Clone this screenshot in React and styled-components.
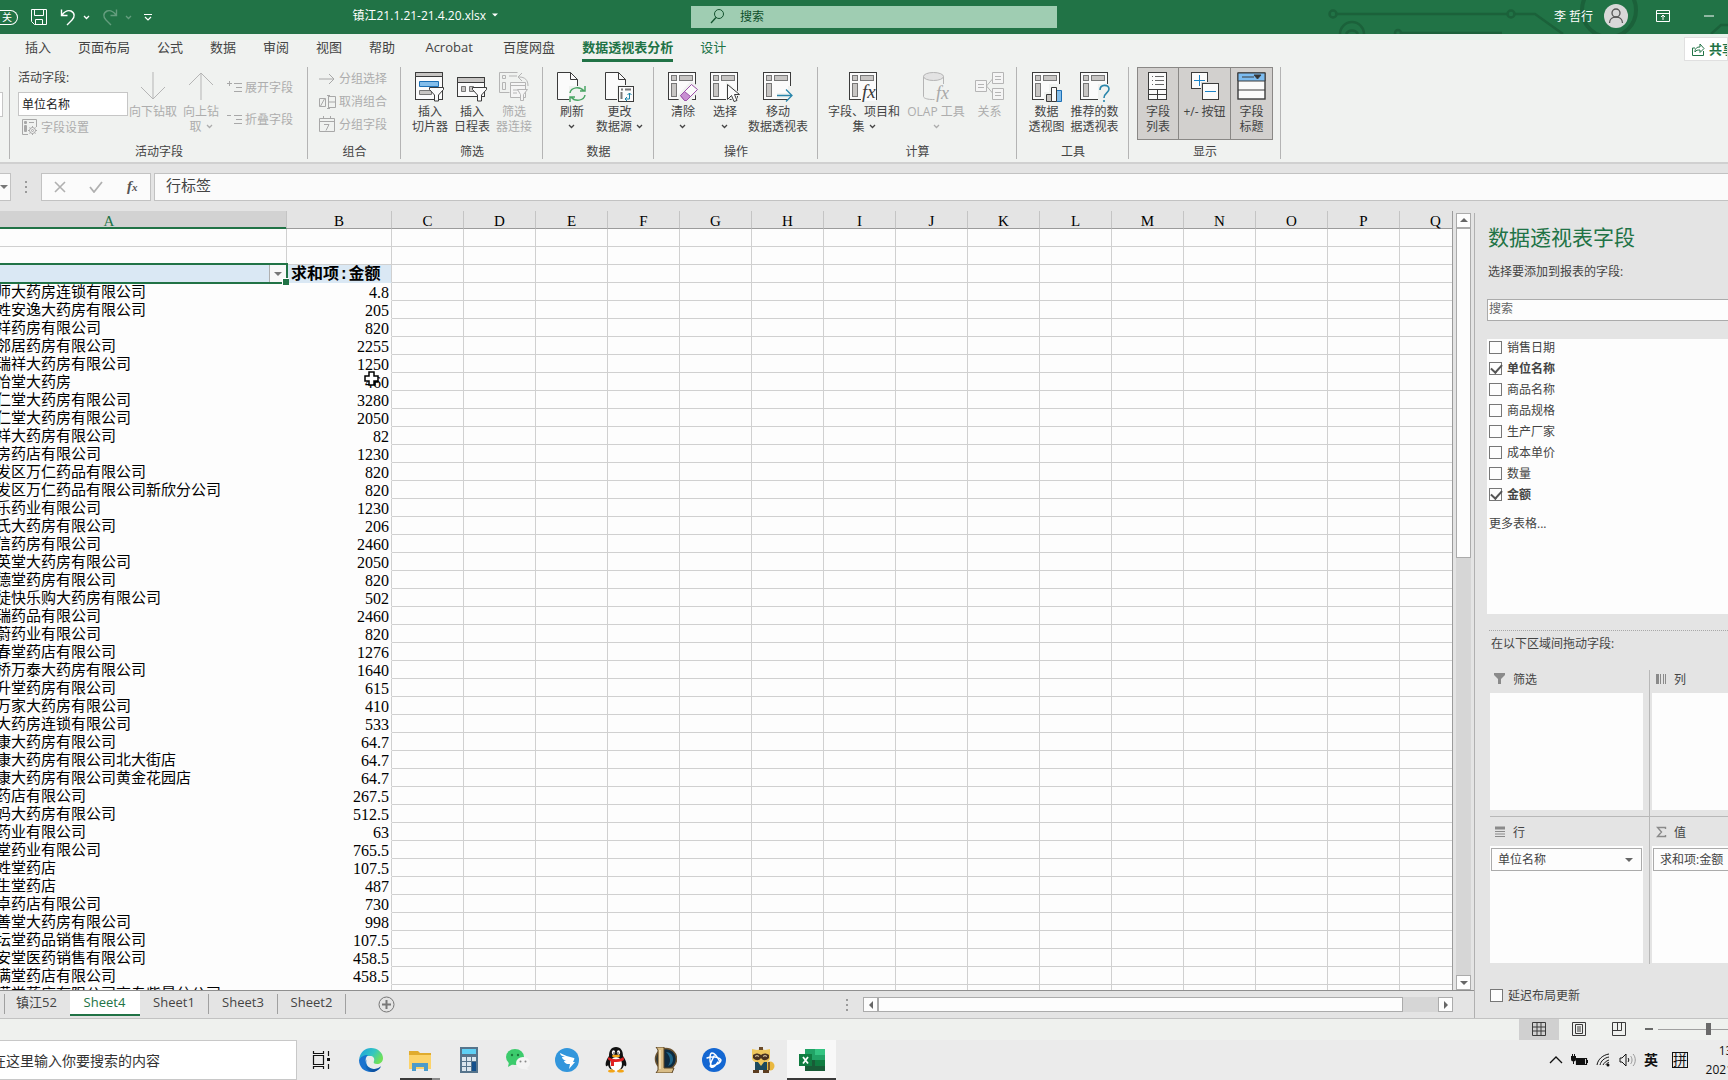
import React from 'react';
import styled, { createGlobalStyle, css } from 'styled-components';

const UI_FONT = '"Open Sans", "Noto Sans CJK SC", sans-serif';
const SHEET_FONT = '"Liberation Serif", "Noto Sans CJK SC", serif';

const GREEN = '#217346';

const GlobalStyle = createGlobalStyle`
* {
  box-sizing: border-box;
}
body {
  margin: 0;
  overflow: hidden;
  background: #e4e4e4;
}
button, input, select {
  font: inherit;
  color: inherit;
  margin: 0;
  padding: 0;
  border: 0;
  border-radius: 0;
  background: none;
}
svg {
  display: block;
  flex: none;
}
`;

const Window = styled.div`
height: 100vh;
display: flex;
flex-direction: column;
overflow: hidden;
font-family: ${UI_FONT};
font-size: 12px;
line-height: 15px;
color: #444;
white-space: nowrap;
`;

/* title bar */

const TitleBar = styled.header`
position: relative;
flex: none;
height: 34px;
display: grid;
grid-template-columns: 1.03fr 366px 1fr;
background: ${GREEN};
color: #fff;
`;

const Circuit = styled.svg`
position: absolute;
right: 0;
top: 0;
`;

const TitleLeft = styled.div`
display: flex;
align-items: center;
justify-content: space-between;
padding: 0 193px 4px 0;
`;

const QuickAccess = styled.div`
display: flex;
align-items: center;
gap: 12px;
padding-top: 4px;
`;

const AutoSave = styled.button`
width: 18px;
height: 15px;
border: 1px solid #fff;
border-left: 0;
border-radius: 0 8px 8px 0;
font-size: 10px;
line-height: 12px;
text-align: left;
padding-left: 2px;
`;

const QuickButton = styled.button`
display: flex;
align-items: center;
gap: 7px;
opacity: ${p => p.disabled ? '0.3' : '1'};
`;

const FileName = styled.button`
display: flex;
align-items: center;
gap: 6px;
`;

const SearchBox = styled.label`
display: flex;
align-items: center;
gap: 15px;
height: 22px;
margin-top: 6px;
padding: 0 0 2px 19px;
background: #9fcdb2;
color: #0e4f2b;
`;

const SearchInput = styled.input`
flex: 1;
min-width: 0;
&::placeholder {
  color: #0e4f2b;
  opacity: 1;
}
`;

const TitleRight = styled.div`
position: relative;
display: flex;
align-items: center;
justify-content: flex-end;
padding: 0 14px 2px 0;
`;

const Account = styled.button`
display: flex;
align-items: center;
gap: 11px;
margin-right: 28px;
`;

const WindowButton = styled.button`
margin-left: ${p => p.$gap || 0}px;
`;

/* ribbon */

const TabRow = styled.nav`
flex: none;
height: 33px;
display: flex;
justify-content: space-between;
align-items: flex-start;
background: linear-gradient(#e9f3ec 0 6px, #f0f2f0 6px);
`;

const Tabs = styled.div`
display: flex;
gap: 27px;
padding-left: 25px;
`;

const Tab = styled.button`
height: 28px;
min-width: ${p => p.$latin ? '54px' : '0'};
padding-top: 1px;
font-size: 13px;
line-height: 20px;
color: ${p => p.$accent ? GREEN : '#444'};
font-weight: ${p => p.$active ? 'bold' : 'normal'};
border-bottom: 3px solid ${p => p.$active ? GREEN : 'transparent'};
`;

const ShareButton = styled.button`
display: flex;
align-items: center;
gap: 4px;
width: 44px;
height: 24px;
margin-top: 3px;
padding-left: 7px;
overflow: hidden;
background: #fff;
border: 1px solid #e0e0e0;
color: ${GREEN};
font-size: 13px;
font-weight: bold;
`;

const Ribbon = styled.div`
flex: none;
height: 95px;
display: flex;
align-items: flex-start;
background: #f0f2f0;
`;

const GroupBox = styled.section`
height: 92px;
display: flex;
flex-direction: column;
padding: 0 7px 0 8px;
border-right: 1px solid #b4b4b4;
`;

const RibbonEdge = styled.div`
width: 10px;
height: 92px;
padding-top: 25px;
border-right: 1px solid #b4b4b4;
&::before {
  content: '';
  display: block;
  width: 2px;
  height: 23px;
  background: #fff;
  border: 1px solid #c6c6c6;
  border-left: 0;
}
`;

const GroupBody = styled.div`
height: 77px;
display: flex;
align-items: flex-start;
`;

const GroupTitle = styled.h2`
margin: 0;
font-size: 12px;
font-weight: normal;
line-height: 15px;
text-align: center;
`;

const BigButton = styled.button`
width: ${p => p.$width}px;
height: 73px;
padding-top: 5px;
display: flex;
flex-direction: column;
align-items: center;
gap: 2px;
color: ${p => p.disabled ? '#adadad' : '#444'};
${p => p.$pressed && css`
  background: #d2d0ce;
  border: 1px solid #8a8886;
  border-left-width: ${p.$joined ? '0' : '1px'};
  padding-top: 4px;
`}
`;

const SmallButton = styled.button`
height: ${p => p.$height}px;
display: flex;
align-items: center;
gap: 3px;
padding-left: 3px;
color: #adadad;
`;

const Stack = styled.div`
display: flex;
flex-direction: column;
align-items: flex-start;
width: ${p => p.$width}px;
padding-top: ${p => p.$top || 0}px;
`;

const FieldLabel = styled.label`
line-height: 22px;
`;

const FieldInput = styled.input`
width: 110px;
height: 24px;
margin: 3px 0 1px;
padding: 0 0 1px 3px;
background: #fff;
border: 1px solid #c6c6c6;
color: #222;
`;

/* formula bar */

const FormulaBar = styled.div`
flex: none;
height: 49px;
display: flex;
align-items: flex-start;
padding-top: 9px;
background: #e4e4e4;
border-top: 2px solid #d0d0d0;
`;

const NameBox = styled.button`
width: 11px;
height: 28px;
display: flex;
align-items: center;
background: #fbfbfb;
border: 1px solid #c2c2c2;
border-left: 0;
`;

const Grip = styled.div`
width: ${p => p.$width}px;
height: 28px;
display: flex;
align-items: center;
justify-content: center;
`;

const FormulaTools = styled.div`
width: 110px;
height: 28px;
display: flex;
align-items: center;
justify-content: space-between;
padding: 0 10px 0 12px;
margin-right: 3px;
background: #fbfbfb;
border: 1px solid #c2c2c2;
`;

const FormulaInput = styled.input`
flex: 1;
height: 28px;
padding: 0 0 6px 11px;
background: #fbfbfb;
border: 1px solid #c2c2c2;
border-right: 0;
font-size: 15px;
`;

/* worksheet */

const Workspace = styled.main`
flex: 1;
min-height: 0;
display: flex;
`;

const SheetArea = styled.div`
flex: 1;
min-width: 0;
display: flex;
flex-direction: column;
`;

const GridRow = styled.div`
flex: 1;
min-height: 0;
display: flex;
`;

const Viewport = styled.div`
position: relative;
flex: 1;
min-width: 0;
overflow: hidden;
background: #fdfdfd;
border-right: 1px solid #9b9b9b;
`;

/* column A starts left of the window, the view is scrolled into it */
const Grid = styled.table`
width: 1540px;
margin-left: -68px;
table-layout: fixed;
border-collapse: separate;
border-spacing: 0;
font-family: ${SHEET_FONT};
color: #000;
`;

const ColumnHeader = styled.th`
height: 18px;
padding: 2px 0 0;
font-size: 15px;
font-weight: normal;
line-height: 14px;
background: ${p => p.$active ? '#d2d2d2' : '#e4e4e4'};
color: ${p => p.$active ? GREEN : '#000'};
border-right: 1px solid #c4c4c4;
border-bottom: 1px solid ${p => p.$active ? GREEN : '#9b9b9b'};
box-shadow: ${p => p.$active ? `inset 0 -1px ${GREEN}` : 'none'};
`;

const Cell = styled.td`
position: relative;
height: 18px;
padding: 2px 0 0;
font-size: 15px;
line-height: 15px;
border-right: 1px solid #d0d0d0;
border-bottom: 1px solid #d0d0d0;
`;

const NameCell = styled(Cell)`
padding-left: 64px;
border-color: transparent;
`;

const AmountCell = styled(Cell)`
padding-right: 2px;
font-size: 16px;
text-align: right;
border-bottom-color: transparent;
`;

const SelectedCell = styled(Cell)`
padding: 0;
background: #dae8f4;
border-color: transparent;
`;

const PivotHead = styled(Cell)`
padding: 3px 0 0 4px;
font-family: "Liberation Mono", "Noto Sans CJK SC", monospace;
font-size: 16px;
line-height: 14px;
font-weight: bold;
background: #dae8f4;
border-bottom-color: transparent;
`;

const FilterButton = styled.button`
width: 17px;
height: 17px;
margin-left: auto;
display: flex;
align-items: center;
justify-content: center;
background: #f8f8f8;
border-left: 1px solid #b0b0b0;
`;

const Selection = styled.div`
position: absolute;
top: -2px;
right: -2px;
bottom: -2px;
left: 0;
z-index: 1;
pointer-events: none;
border: 2px solid ${GREEN};
&::after {
  content: '';
  position: absolute;
  right: -3px;
  bottom: -3px;
  width: 6px;
  height: 6px;
  background: ${GREEN};
  border: 1px solid #fff;
  border-width: 1px 0 0 1px;
}
`;

const Pointer = styled.svg`
position: absolute;
left: 364px;
top: 160px;
z-index: 2;
`;

const VScroll = styled.div`
width: 15px;
margin: 2px 3px 0;
display: flex;
flex-direction: column;
background: #d6d6d6;
`;

const HScroll = styled.div`
width: 590px;
height: 15px;
display: flex;
background: #d6d6d6;
`;

const ScrollButton = styled.button`
flex: none;
width: 15px;
height: 15px;
display: flex;
align-items: center;
justify-content: center;
background: #fdfdfd;
border: 1px solid #ababab;
`;

const Thumb = styled.div`
flex: 0 0 ${p => p.$size}px;
margin-${p => p.$vertical ? 'bottom' : 'right'}: auto;
background: #fdfdfd;
border: 1px solid #ababab;
`;

const SheetBar = styled.div`
flex: none;
height: 28px;
display: flex;
align-items: flex-start;
padding-right: 21px;
border-top: 1px solid #8f8f8f;
background: #e4e4e4;
`;

const SheetTabs = styled.div`
display: flex;
padding-left: 4px;
background: linear-gradient(#a0a0a0, #a0a0a0) 4px 3px / 1px 20px no-repeat;
`;

const SheetTab = styled.button`
width: ${p => p.$width}px;
height: 25px;
padding: 0 1px 2px 0;
font-size: 13px;
line-height: 20px;
color: ${p => p.$active ? GREEN : '#444'};
border-bottom: 2px solid ${p => p.$active ? GREEN : 'transparent'};
background-color: ${p => p.$active ? '#fff' : 'transparent'};
background-image: ${p => p.$divided ? 'linear-gradient(#a0a0a0, #a0a0a0)' : 'none'};
background-size: 1px 20px;
background-position: right 3px;
background-repeat: no-repeat;
`;

const AddSheet = styled.button`
margin: 4px auto 0 31px;
`;

const BarEnd = styled.div`
display: flex;
align-items: center;
height: 27px;
`;

/* field pane */

const Pane = styled.aside`
width: 254px;
margin-top: 2px;
padding-left: 12px;
display: flex;
flex-direction: column;
overflow: hidden;
border-left: 1px solid #b0b0b0;
`;

const PaneTitle = styled.h1`
margin: 9px 0 0;
padding-left: 1px;
font-size: 21px;
font-weight: normal;
line-height: 30px;
color: ${GREEN};
`;

const PaneText = styled.p`
margin: ${p => p.$top}px 0 0;
padding-left: ${p => p.$indent}px;
line-height: 18px;
`;

const PaneSearch = styled.input`
flex: none;
height: 22px;
margin: 18px 0 18px;
padding: 0 0 3px 1px;
background: #fdfdfd;
border: 1px solid #ababab;
border-right: 0;
&::placeholder {
  color: #666;
  opacity: 1;
}
`;

const FieldList = styled.div`
flex: none;
height: 275px;
display: flex;
flex-direction: column;
align-items: flex-start;
padding: 0 2px;
background: #fdfdfd;
`;

const Check = styled.label`
display: flex;
align-items: center;
gap: 5px;
height: 21px;
padding-bottom: 5px;
font-weight: ${p => p.$bold ? 'bold' : 'normal'};
`;

const CheckBox = styled.input`
appearance: none;
width: 13px;
height: 13px;
background: #fdfdfd;
border: 1px solid #777;
&:checked::after {
  content: '';
  display: block;
  width: 9px;
  height: 5px;
  margin: 1px 0 0 1px;
  border: solid #555;
  border-width: 0 0 2px 2px;
  transform: rotate(-48deg);
}
`;

const MoreLink = styled.a`
margin-top: 8px;
line-height: 18px;
color: #444;
text-decoration: none;
`;

const Divider = styled.hr`
flex: none;
width: 100%;
margin: 16px 0 0 2px;
border: 0;
border-top: 1px dotted #a8a8a8;
`;

const Areas = styled.div`
flex: none;
display: grid;
grid-template-columns: 160px 160px;
margin: 17px 0 0 3px;
`;

const Area = styled.section`
height: 147px;
padding: ${p => p.$bottom ? '6px' : '0'} 0 0 ${p => p.$right ? '2px' : '0'};
border-right: ${p => p.$right ? '0' : '1px solid #b8b8b8'};
border-bottom: ${p => p.$bottom ? '0' : '1px solid #b8b8b8'};
`;

const AreaTitle = styled.h3`
display: flex;
align-items: center;
gap: 7px;
height: 23px;
margin: 0;
padding: 0 0 5px 4px;
font-size: 12px;
font-weight: normal;
`;

const AreaBox = styled.div`
width: 153px;
height: 117px;
padding: 2px 1px;
background: #fdfdfd;
`;

const FieldPill = styled.div`
display: flex;
align-items: center;
height: 23px;
padding-right: 8px;
border: 1px solid #ababab;
`;

const PillSelect = styled.select`
appearance: none;
flex: 1;
height: 21px;
padding-left: 6px;
`;

const Defer = styled.div`
padding: 23px 0 0 3px;
`;

/* status bar and taskbar */

const StatusBar = styled.footer`
flex: none;
height: 22px;
display: flex;
justify-content: flex-end;
background: #eff1ee;
border-top: 1px solid #c2c2c2;
`;

const ViewButton = styled.button`
width: 40px;
display: flex;
align-items: center;
justify-content: center;
padding-bottom: 2px;
background: ${p => p.$active ? '#d0d0d0' : 'none'};
`;

const Zoom = styled.div`
display: flex;
align-items: center;
gap: 5px;
width: 89px;
padding: 0 0 1px 6px;
overflow: hidden;
`;

const ZoomRange = styled.input`
appearance: none;
flex: none;
width: 100px;
height: 12px;
background: linear-gradient(#a0a0a0, #a0a0a0) center / 100% 1px no-repeat;
&::-webkit-slider-thumb {
  appearance: none;
  width: 5px;
  height: 12px;
  background: #6a6a6a;
}
`;

const Taskbar = styled.div`
flex: none;
height: 40px;
display: flex;
background: #ebebeb;
`;

const TaskSearch = styled.input`
width: 317px;
height: 40px;
margin-left: -20px;
padding-left: 11px;
background: #fff;
border: 1px solid #c8c8c8;
font-size: 14px;
color: #333;
&::placeholder {
  color: #333;
  opacity: 1;
}
`;

const Apps = styled.div`
display: flex;
flex: 1;
`;

const AppButton = styled.button`
width: 49px;
display: flex;
align-items: center;
justify-content: center;
background: ${p => p.$active ? '#f8f8f8' : 'none'};
box-shadow: ${p => p.$active ? 'inset 0 -2px #3a3a3a' : 'none'};
${p => p.$stacked && css`
  background: linear-gradient(90deg, #3a3a3a 32px, #8a8a8a 32px) center bottom / 40px 2px no-repeat;
`}
`;

const Tray = styled.div`
display: flex;
align-items: center;
gap: 8px;
width: 179px;
font-size: 14px;
color: #111;
overflow: hidden;
`;

const Ime = styled.span`
font-weight: ${p => p.$boxed ? 'normal' : 'bold'};
border: ${p => p.$boxed ? '1px solid #111' : '0'};
line-height: 14px;
margin-left: ${p => p.$boxed ? '6px' : '0'};
`;

const Clock = styled.time`
flex: none;
width: 64px;
margin-left: 6px;
font-size: 12px;
line-height: 19px;
text-align: center;
white-space: pre;
`;

/* icons */

const Chevron = ({ color = 'currentColor' }) => (
  <svg width="7" height="5" viewBox="0 0 7 5" fill="none" stroke={color} strokeWidth="1.3"><path d="M1 1l2.500 2.500L6 1" /></svg>
);

const TRIANGLES = {
  up: 'M0 5L4 1l4 4z',
  down: 'M0 2h8L4 6z',
  left: 'M6 0v8L2 4z',
  right: 'M2 0v8l4-4z',
};

const Triangle = ({ dir = 'down', color = '#666', size = 8 }) => (
  <svg width={size} height={size} viewBox="0 0 8 8" fill={color}><path d={TRIANGLES[dir]} /></svg>
);

const Dots = () => (
  <svg width="2" height="12" viewBox="0 0 2 12" fill="#9a9a9a"><path d="M0 0h2v2H0zM0 5h2v2H0zM0 10h2v2H0z" /></svg>
);

const Glyph = ({ children, w = 30, h = 30, color = '#3b3b3b' }) => (
  <svg width={w} height={h} viewBox={`0 0 ${w} ${h}`} fill="none" stroke={color}>{children}</svg>
);

const PivotFrame = () => (
  <g>
    <rect x=".5" y=".5" width="27" height="27" fill="#fbfbfb" />
    <g fill="#c8c6c4" stroke="#777">
      <rect x="3.500" y="3.500" width="5" height="5" />
      <rect x="11.500" y="3.500" width="13" height="5" />
      <rect x="3.500" y="11.500" width="5" height="13" />
    </g>
  </g>
);

const Funnel = ({ x, y }) => (
  <path transform={`translate(${x} ${y})`} d="M.5.5h14v2L9.500 8v6h-4V8L.5 2.500z" fill="#fbfbfb" />
);

const Fx = ({ x, y, size, color = '#3b3b3b' }) => (
  <text x={x} y={y} fontFamily="Liberation Serif" fontStyle="italic" fontSize={size} fill={color} stroke="none">fx</text>
);

const icons = {
  down: <Glyph w={26} color="#b5b5b5"><path d="M13 0v27M1 15l12 12 12-12" /></Glyph>,
  up: <Glyph w={26} color="#b5b5b5"><path d="M13 28V1M1 13L13 1l12 12" /></Glyph>,
  slicer: (
    <Glyph>
      <rect x=".5" y=".5" width="27" height="27" fill="#fbfbfb" />
      <path d="M.5.5h27v4H.5z" fill="#c8c6c4" />
      <path d="M4.500 9.500h19v5h-19z" fill="#83bdea" stroke="#1b6fb5" />
      <path d="M4.500 18.500h12v4h-12z" fill="#c8c6c4" stroke="#777" />
      <Funnel x={14} y={15} />
    </Glyph>
  ),
  timeline: (
    <Glyph>
      <rect x=".5" y="5.500" width="27" height="19" fill="#fbfbfb" />
      <path d="M.5 5.500h27v5H.5z" fill="#c8c6c4" />
      <path d="M4.500 14.500h4v5h-4zM12.500 14.500h4v5h-4z" fill="#c8c6c4" stroke="#777" />
      <Funnel x={15} y={15} />
    </Glyph>
  ),
  filterLink: (
    <Glyph color="#b5b5b5">
      <path d="M10.500 20.500H.5V.5h18M3.500 3.500h3v3h-3zM10 4h8M3.500 10.500h3v7h-3zM29 14c0-6-3-9-9-9M23 1l-4 4 4 4" />
      <path d="M11.500 10.500h15v15h-15zM11.500 13.500h15" fill="#f5f5f5" />
      <path d="M14 18h6M14 21h4" />
      <path d="M18.500 17.500h10l-4 5v6h-3v-6z" fill="#f5f5f5" />
    </Glyph>
  ),
  refresh: (
    <Glyph>
      <path d="M.5.5h13l7 7v20H.5z" fill="#fbfbfb" />
      <path d="M13.500.5v7h7" />
      <path d="M12 14h18v16H12z" fill="#f0f2f0" stroke="none" />
      <g stroke="#4aa564" strokeWidth="1.500">
        <path d="M13 21c1-6 10-7 14-2M28 14v5h-5M28 23c-1 6-10 7-14 2M13 30v-5h5" />
      </g>
    </Glyph>
  ),
  source: (
    <Glyph>
      <path d="M.5.5h13l7 7v20H.5z" fill="#fbfbfb" />
      <path d="M13.500.5v7h7" />
      <path d="M12 13h16v17H12z" fill="#f0f2f0" stroke="none" />
      <rect x="13.500" y="14.500" width="15" height="15" fill="#fbfbfb" />
      <path d="M16 17.500h2M20 17.500h6M16.500 20v7" stroke="#777" strokeWidth="2" />
      <path d="M20 27h4.500v-6M22 25l-2 2 2 2M22.500 23l2-2 2 2" stroke="#1b83a8" />
    </Glyph>
  ),
  clear: (
    <Glyph>
      <PivotFrame />
      <path d="M10 23l13-14 7 5v6l-8 10H11z" fill="#f0f2f0" stroke="none" />
      <path d="M12.500 23.500l11-11 6 5-11 11h-2z" fill="#fbfbfb" stroke="#9b4fa8" />
      <path d="M12.500 23.500l4-4 6 5-4 4h-2z" fill="#c890d2" stroke="#9b4fa8" />
    </Glyph>
  ),
  select: (
    <Glyph>
      <PivotFrame />
      <path d="M17.500 12.500v15l4-4 2.500 6 3-1-2.500-6h5z" fill="#fbfbfb" stroke="#f0f2f0" strokeWidth="3" />
      <path d="M17.500 12.500v15l4-4 2.500 6 3-1-2.500-6h5z" fill="#fbfbfb" />
    </Glyph>
  ),
  move: (
    <Glyph>
      <PivotFrame />
      <path d="M25 14h5v16h-5zM14 21h12v5H14z" fill="#f0f2f0" stroke="none" />
      <path d="M14 23.500h15M23 17.500l6 6-6 6" stroke="#2a86ab" strokeWidth="1.300" />
    </Glyph>
  ),
  fields: (
    <Glyph>
      <PivotFrame />
      <path d="M12 12h15v17H12z" fill="#fbfbfb" stroke="none" />
      <Fx x={13} y={26} size={19} />
    </Glyph>
  ),
  olap: (
    <Glyph color="#b5b5b5">
      <path d="M2.500 4.500v20c0 2 5 3 9 3h2M22.500 4.500V12" />
      <ellipse cx="12.500" cy="4.500" rx="10" ry="4" fill="#e3e3e3" />
      <Fx x={15} y={27} size={18} color="#a8a8a8" />
    </Glyph>
  ),
  relation: (
    <Glyph color="#b5b5b5">
      <path d="M.5 8.500h11v11H.5zM17.500.5h11v11h-11zM17.500 16.500h11v11h-11z" fill="#f5f5f5" />
      <path d="M11.500 14l6-7M11.500 14l6 7M3 12.500h6M3 15.500h6M20 4.500h6M20 7.500h6M20 20.500h6M20 23.500h6" />
    </Glyph>
  ),
  chart: (
    <Glyph>
      <PivotFrame />
      <path d="M12 20h5v-8h13v18H12z" fill="#f0f2f0" stroke="none" />
      <path d="M14.500 22.500h5v7h-5z" fill="#c8c6c4" />
      <path d="M24.500 18.500h5v11h-5z" fill="#83bdea" stroke="#1b6fb5" />
      <path d="M19.500 15.500h5v14h-5z" fill="#fbfbfb" />
    </Glyph>
  ),
  suggest: (
    <Glyph>
      <PivotFrame />
      <path d="M18 12h12v18H18z" fill="#f0f2f0" stroke="none" />
      <path d="M20 18c0-6 9-6 9-1 0 4-5 4-5 9M24 28v2" stroke="#2a86ab" strokeWidth="1.600" />
    </Glyph>
  ),
  list: (
    <Glyph w={20}>
      <rect x=".5" y=".5" width="18" height="27" fill="#fbfbfb" />
      <path d="M4 4.500h1M7 4.500h9M4 8.500h1M7 8.500h9M4 12.500h1M7 12.500h9" stroke="#666" />
      <path d="M.5 17.500h18M.5 22.500h18M9.500 17.500v10" />
    </Glyph>
  ),
  plusMinus: (
    <Glyph>
      <rect x="1.500" y=".5" width="16" height="16" fill="#fbfbfb" />
      <path d="M4 8.500h11M9.500 3v11" stroke="#1b83c8" />
      <rect x="12.500" y="11.500" width="16" height="16" fill="#fbfbfb" stroke="#d2d0ce" strokeWidth="3" />
      <rect x="12.500" y="11.500" width="16" height="16" fill="#fbfbfb" />
      <path d="M15 19.500h11" stroke="#1b83c8" />
    </Glyph>
  ),
  headers: (
    <Glyph>
      <rect x="1" y="1" width="27" height="26" fill="#fbfbfb" strokeWidth="1.400" />
      <path d="M1 1h27v8H1z" fill="#7cbcf0" />
      <path d="M1 18h27" />
      <path d="M5 5h12" />
      <path d="M17 3h7l-3.500 4z" fill="#333" />
    </Glyph>
  ),
};

const small = {
  settings: (
    <Glyph w={17} h={17} color="#a8a8a8">
      <path d="M7 15.500H1.500V.5h14V8M4 3.500h2M8 3.500h5M4.500 6v7" /><path d="M3.500 2.500h2v2h-2zM3.500 6.500h2v6h-2z" />
      <circle cx="11.500" cy="11.500" r="3" /><circle cx="11.500" cy="11.500" r="1" /><path d="M11.500 7v1.500M11.500 14.500V16M7 11.500h1.500M14.500 11.500H16M8.500 8.500l1 1M13.500 13.500l1 1M14.500 8.500l-1 1M9.500 13.500l-1 1" />
    </Glyph>
  ),
  expand: <Glyph w={15} h={14} color="#a8a8a8"><path d="M0 3.500h5M2.500 1v5M7 3.500h8M9 7.500h6M7 11.500h8" /></Glyph>,
  collapse: <Glyph w={15} h={14} color="#a8a8a8"><path d="M0 3.500h4M7 3.500h8M9 7.500h6M7 11.500h8" /></Glyph>,
  arrow: <Glyph w={17} h={14} color="#a8a8a8"><path d="M0 7h15M10 2l5 5-5 5" /></Glyph>,
  ungroup: <Glyph w={17} h={14} color="#a8a8a8"><path d="M.5 3.500h6v8h-6zM1 12l5-9M8 .5h3M8 13.500h3M9.500 1v12M9.500 1.500h7v11h-7M9.500 7h7" /></Glyph>,
  date: <Glyph w={17} h={17} color="#a8a8a8"><path d="M.5 2.500h15v13H.5zM.5 5.500h15M4.500 0v3M11.500 0v3M5 8.500h5l-3 6" /></Glyph>,
};

const appIcons = {
  taskview: (
    <Glyph w={20} h={20} color="#111"><path d="M1.500 5.500h10v9h-10zM1.500 1v2.500h10V1M1.500 19v-2.500h10V19M16.500 1v5M16.500 14v5" strokeWidth="1.200" /><path d="M15 8h3v3h-3z" fill="#111" stroke="none" /></Glyph>
  ),
  edge: (
    <svg width="24" height="24" viewBox="0 0 24 24">
      <defs>
        <linearGradient id="edgeTop" x1="0" y1="0" x2="1" y2="0.500"><stop offset="0" stopColor="#1b9de2" /><stop offset=".6" stopColor="#34c6c0" /><stop offset="1" stopColor="#6fe05a" /></linearGradient>
        <linearGradient id="edgeLow" x1="0" y1="0" x2="1" y2="1"><stop offset="0" stopColor="#1583d8" /><stop offset="1" stopColor="#0c3f8c" /></linearGradient>
      </defs>
      <path d="M0 12C1 4 6 0 12 0c7 0 12 5 12 10 0 4-3 6-6 6-3 0-4-1-3-3 1-3-1-5-4-5C6 8 1 9 0 12z" fill="url(#edgeTop)" />
      <path d="M0 12c1-3 5-5 9-5-2 2-3 4-2 8 1 4 5 6 9 6 2 0 4-1 6-2-2 3-6 5-10 5C5 24 0 19 0 12z" fill="#1b74cf" />
      <path d="M9 10c-4 4-1 11 6 11 3 0 5-1 7-3-2 4-6 6-9 6-7-1-9-9-4-14z" fill="url(#edgeLow)" />
    </svg>
  ),
  explorer: (
    <svg width="24" height="24" viewBox="0 0 24 24">
      <path d="M1 3h9l2 2h11v16H1z" fill="#e0ab2e" /><path d="M1 7h22v14H1z" fill="#fcd36a" />
      <path d="M4 23v-8h16v8h-4v-4H8v4z" fill="#4b9bc9" />
    </svg>
  ),
  calculator: (
    <svg width="20" height="26" viewBox="0 0 20 26">
      <path d="M1 0h18v26H1z" fill="#56748c" /><path d="M3 2h14v5H3z" fill="#5fd0f5" />
      <path d="M3 10h4v4H3zM8 10h4v4H8zM13 10h4v4h-4zM3 15h4v4H3zM8 15h4v4H8zM3 20h4v4H3zM8 20h4v4H8z" fill="#dbe6ee" />
      <path d="M13 15h4v9h-4z" fill="#14508c" />
    </svg>
  ),
  wechat: (
    <svg width="24" height="22" viewBox="0 0 24 22">
      <ellipse cx="9" cy="8" rx="9" ry="8" fill="#3ccb6c" /><path d="M3 13l-1 5 5-3z" fill="#3ccb6c" />
      <circle cx="6" cy="6" r="1.200" fill="#1b7a3c" /><circle cx="12" cy="6" r="1.200" fill="#1b7a3c" />
      <ellipse cx="17" cy="14" rx="7" ry="6" fill="#f4f4f4" /><path d="M20 18l3 3-6-1z" fill="#f4f4f4" />
      <circle cx="14.500" cy="12.500" r="1" fill="#888" /><circle cx="19.500" cy="12.500" r="1" fill="#888" />
    </svg>
  ),
  dingtalk: (
    <svg width="24" height="24" viewBox="0 0 24 24">
      <circle cx="12" cy="12" r="12" fill="#3296dc" />
      <path d="M5 5c4 2 9 4 14 5 1 0 0 2-1 4h2l-6 7 1-5h-3c-2-1-3-2-3-3l2 0c-3-1-4-3-4-4l3 0C7 8 5 7 5 5z" fill="#fff" />
    </svg>
  ),
  qq: (
    <svg width="24" height="26" viewBox="0 0 24 26">
      <path d="M12 0C7 0 5 4 5 9c-3 4-4 8-3 10 1 1 2-1 2-1 1 3 2 5 8 5s7-2 8-5c0 0 1 2 2 1 1-2 0-6-3-10 0-5-2-9-7-9z" fill="#111" />
      <ellipse cx="12" cy="17" rx="6" ry="7" fill="#fff" />
      <ellipse cx="9.500" cy="5.500" rx="1.600" ry="2.200" fill="#fff" /><ellipse cx="14.500" cy="5.500" rx="1.600" ry="2.200" fill="#fff" />
      <circle cx="10" cy="6" r=".8" fill="#111" /><circle cx="14" cy="6" r=".8" fill="#111" />
      <ellipse cx="12" cy="9" rx="4" ry="1.300" fill="#f2a416" />
      <path d="M4.500 10c4 3 11 3 15 0l.5 3c-3 2-7 2-10 2v4H7v-5c-2-1-3-1-3-2z" fill="#e02222" />
      <path d="M4 24c1-2 6-2 7 0 0 2-7 2-7 0zM13 24c1-2 6-2 7 0 0 2-7 2-7 0z" fill="#f2a416" />
    </svg>
  ),
  league: (
    <svg width="24" height="26" viewBox="0 0 24 26">
      <circle cx="13" cy="12" r="10.500" fill="#0e2b40" stroke="#6b5230" strokeWidth="1.500" />
      <path d="M13 5c4 0 7 3 7 7s-2 6-5 7c3-4 3-9-2-14z" fill="#1d6488" />
      <path d="M3 0h8v21h10l-2 5H3l2-3V3z" fill="#d9bd86" stroke="#5b4425" />
      <path d="M7 3v19" stroke="#f5e3b8" strokeWidth="1.500" />
    </svg>
  ),
  battle: (
    <svg width="24" height="24" viewBox="0 0 24 24" fill="none" stroke="#fff" strokeWidth="1.400" strokeLinecap="round">
      <circle cx="12" cy="12" r="12" fill="#1467d2" stroke="none" />
      <path d="M9 17C7 11 8 5 10 5c3 0 6 5 8 9M5 10c4-2 13-1 14 2 0 3-6 6-11 6M12 8c-2 5-5 8-3 11 2 1 5-2 7-5" />
    </svg>
  ),
  raccoon: (
    <svg width="26" height="26" viewBox="0 0 26 26">
      <circle cx="20" cy="19" r="4.500" fill="#eab83f" /><path d="M19 15v8" stroke="#5b3d20" strokeWidth="1.500" />
      <path d="M2 2l5 1c3-1 6-1 8 0l5-1v9c0 4-5 5-9 5s-9-1-9-5z" fill="#efc65b" />
      <path d="M3 8c3-2 5-2 8 0 3-2 5-2 8 0v3c-3 3-6 3-8 0-2 3-5 3-8 0z" fill="#4a3220" />
      <path d="M5 9.500c1-1 3-1 4 0M13 9.500c1-1 3-1 4 0" stroke="#f5e3b8" fill="none" />
      <path d="M9 0h4v3H9z" fill="#6b4a28" /><path d="M5 15h12v8H5z" fill="#1c4a5e" />
      <path d="M8 15h6l-3 4z" fill="#efc65b" /><path d="M3 23h6v3H3zM13 23h6v3h-6z" fill="#5b3d20" />
    </svg>
  ),
  excel: (
    <svg width="26" height="24" viewBox="0 0 26 24">
      <path d="M6 1h10v11H6z" fill="#21a366" /><path d="M16 1h10v6H16z" fill="#33c481" />
      <path d="M16 7h10v6H16z" fill="#21a366" /><path d="M6 12h20v11H6z" fill="#185c37" /><path d="M16 12h10v6H16z" fill="#107c41" />
      <path d="M0 6h13v12H0z" fill="#107c41" /><path d="M4 9l5 6.500M9 9l-5 6.500" stroke="#fff" strokeWidth="1.800" />
    </svg>
  ),
};

/* data */

const TABS = ['插入', '页面布局', '公式', '数据', '审阅', '视图', '帮助', 'Acrobat', '百度网盘', '数据透视表分析', '设计'];
const ACTIVE_TAB = '数据透视表分析';

const GROUPS = [
  {
    title: '筛选',
    items: [
      { icon: 'slicer', lines: ['插入', '切片器'], width: 42 },
      { icon: 'timeline', lines: ['插入', '日程表'], width: 42 },
      { icon: 'filterLink', lines: ['筛选', '器连接'], width: 42, disabled: true },
    ],
  },
  {
    title: '数据',
    items: [
      { icon: 'refresh', lines: ['刷新', ''], width: 42, menu: true },
      { icon: 'source', lines: ['更改', '数据源'], width: 53, menu: true },
    ],
  },
  {
    title: '操作',
    items: [
      { icon: 'clear', lines: ['清除', ''], width: 42, menu: true },
      { icon: 'select', lines: ['选择', ''], width: 42, menu: true },
      { icon: 'move', lines: ['移动', '数据透视表'], width: 64 },
    ],
  },
  {
    title: '计算',
    items: [
      { icon: 'fields', lines: ['字段、项目和', '集'], width: 76, menu: true },
      { icon: 'olap', lines: ['OLAP 工具', ''], width: 68, menu: true, disabled: true },
      { icon: 'relation', lines: ['关系'], width: 39, disabled: true },
    ],
  },
  {
    title: '工具',
    items: [
      { icon: 'chart', lines: ['数据', '透视图'], width: 43 },
      { icon: 'suggest', lines: ['推荐的数', '据透视表'], width: 53 },
    ],
  },
  {
    title: '显示',
    items: [
      { icon: 'list', lines: ['字段', '列表'], width: 42, pressed: true },
      { icon: 'plusMinus', lines: ['+/- 按钮'], width: 52, pressed: true, joined: true },
      { icon: 'headers', lines: ['字段', '标题'], width: 42, pressed: true, joined: true },
    ],
  },
];

const COLUMNS = 'ABCDEFGHIJKLMNOPQ'.split('');
const EMPTY = COLUMNS.slice(2);

const ROWS = [
  ['师大药房连锁有限公司', '4.8'],
  ['姓安逸大药房有限公司', '205'],
  ['祥药房有限公司', '820'],
  ['邻居药房有限公司', '2255'],
  ['瑞祥大药房有限公司', '1250'],
  ['怡堂大药房', '460'],
  ['仁堂大药房有限公司', '3280'],
  ['仁堂大药房有限公司', '2050'],
  ['祥大药房有限公司', '82'],
  ['房药店有限公司', '1230'],
  ['发区万仁药品有限公司', '820'],
  ['发区万仁药品有限公司新欣分公司', '820'],
  ['乐药业有限公司', '1230'],
  ['氏大药房有限公司', '206'],
  ['信药房有限公司', '2460'],
  ['英堂大药房有限公司', '2050'],
  ['德堂药房有限公司', '820'],
  ['徒快乐购大药房有限公司', '502'],
  ['瑞药品有限公司', '2460'],
  ['蔚药业有限公司', '820'],
  ['春堂药店有限公司', '1276'],
  ['桥万泰大药房有限公司', '1640'],
  ['升堂药房有限公司', '615'],
  ['万家大药房有限公司', '410'],
  ['大药房连锁有限公司', '533'],
  ['康大药房有限公司', '64.7'],
  ['康大药房有限公司北大街店', '64.7'],
  ['康大药房有限公司黄金花园店', '64.7'],
  ['药店有限公司', '267.5'],
  ['妈大药房有限公司', '512.5'],
  ['药业有限公司', '63'],
  ['堂药业有限公司', '765.5'],
  ['姓堂药店', '107.5'],
  ['生堂药店', '487'],
  ['卓药店有限公司', '730'],
  ['善堂大药房有限公司', '998'],
  ['坛堂药品销售有限公司', '107.5'],
  ['安堂医药销售有限公司', '458.5'],
  ['满堂药店有限公司', '458.5'],
  ['满堂药店有限公司高专紫晨分公司', ''],
];

const FIELDS = [
  ['销售日期', false],
  ['单位名称', true],
  ['商品名称', false],
  ['商品规格', false],
  ['生产厂家', false],
  ['成本单价', false],
  ['数量', false],
  ['金额', true],
];

const SHEETS = [
  { name: '镇江52', width: 66 },
  { name: 'Sheet4', width: 70, active: true },
  { name: 'Sheet1', width: 69, divided: true },
  { name: 'Sheet3', width: 69, divided: true },
  { name: 'Sheet2', width: 68, divided: true },
];

const APPS = ['taskview', 'edge', 'explorer', 'calculator', 'wechat', 'dingtalk', 'qq', 'league', 'battle', 'raccoon', 'excel'];

/* parts */

const ButtonText = styled.span`
display: block;
height: 15px;
`;

const ButtonLine = styled(ButtonText)`
display: flex;
align-items: center;
justify-content: center;
gap: 4px;
`;

const RibbonButton = ({ icon, lines, width, menu, disabled, pressed, joined }) => (
  <BigButton $width={width} disabled={disabled} $pressed={pressed} $joined={joined}>
    {icons[icon]}
    <span>
      <ButtonText>{lines[0]}</ButtonText>
      {lines.length > 1 && <ButtonLine>{lines[1]}{menu && <Chevron />}</ButtonLine>}
    </span>
  </BigButton>
);

const Group = ({ title, children }) => (
  <GroupBox>
    <GroupBody>{children}</GroupBody>
    <GroupTitle>{title}</GroupTitle>
  </GroupBox>
);

const Blank = () => EMPTY.map(c => <Cell key={c} />);

function Title() {
  return (
    <TitleBar>
      <Circuit width="400" height="34" viewBox="0 0 400 34" fill="none" stroke="#1b613a" strokeWidth="2.500">
        <circle cx="5" cy="14" r="3.500" /><path d="M9 14h170M187 14h20l28 20M12 34a12 12 0 0 1 24 0M18 34a7 7 0 0 1 12 0M74 33h100" />
        <circle cx="183" cy="14" r="3.500" /><circle cx="70" cy="33" r="3" />
        <circle cx="281" cy="10" r="27" strokeWidth="4" /><path d="M383 34l10-9h8" />
      </Circuit>
      <TitleLeft>
        <QuickAccess>
          <AutoSave>关</AutoSave>
          <QuickButton aria-label="保存">
            <Glyph w={18} h={18} color="#fff"><path d="M1.500 1.500h15v15h-12l-3-3zM4.500 1.500v6h9v-6M5.500 16.500v-5h7v5" /></Glyph>
          </QuickButton>
          <QuickButton aria-label="撤消">
            <Glyph w={16} h={18} color="#fff"><path d="M1.500 1.500v6h6M2 7c3-4 6-5 9-4 4 2 4 6 1 9l-5 5" strokeWidth="1.400" /></Glyph>
            <Chevron />
          </QuickButton>
          <QuickButton aria-label="恢复" disabled>
            <Glyph w={16} h={18} color="#fff"><path d="M14.500 1.500v6h-6M14 7c-3-4-6-5-9-4-4 2-4 6-1 9l5 5" strokeWidth="1.400" /></Glyph>
            <Chevron />
          </QuickButton>
          <QuickButton aria-label="自定义快速访问工具栏">
            <Glyph w={8} h={8} color="#fff"><path d="M0 1.500h8M1 4l3 3 3-3" strokeWidth="1.200" /></Glyph>
          </QuickButton>
        </QuickAccess>
        <FileName>镇江21.1.21-21.4.20.xlsx <Triangle color="#fff" size={6} /></FileName>
      </TitleLeft>
      <SearchBox>
        <Glyph w={15} h={16} color="#14532f"><circle cx="9" cy="6" r="4.500" /><path d="M6 9.500L1 15" strokeWidth="1.300" /></Glyph>
        <SearchInput placeholder="搜索" aria-label="搜索" />
      </SearchBox>
      <TitleRight>
        <Account>
          李 哲行
          <svg width="24" height="24" viewBox="0 0 24 24" fill="none" stroke="#555" strokeWidth="1.300">
            <circle cx="12" cy="12" r="12" fill="#d8d8d8" stroke="none" /><circle cx="12" cy="9" r="4" /><path d="M5.500 19c0-8 13-8 13 0" />
          </svg>
        </Account>
        <WindowButton aria-label="功能区显示选项">
          <Glyph w={14} h={12} color="#fff"><path d="M.5.5h13v11H.5zM.5 3.500h13M7 10V5M5 7l2-2 2 2" /></Glyph>
        </WindowButton>
        <WindowButton $gap={34} aria-label="最小化">
          <Glyph w={10} h={2} color="#fff"><path d="M0 1h10" /></Glyph>
        </WindowButton>
      </TitleRight>
    </TitleBar>
  );
}

function RibbonPanel() {
  return (
    <>
      <TabRow>
        <Tabs>
          {TABS.map(t => (
            <Tab
              key={t}
              $latin={t === 'Acrobat'}
              $active={t === ACTIVE_TAB}
              $accent={t === ACTIVE_TAB || t === '设计'}
            >
              {t}
            </Tab>
          ))}
        </Tabs>
        <ShareButton>
          <Glyph w={13} h={13} color={GREEN}><path d="M3 5H.5v7.500h11V8M3 9c0-4 2-5 5-5V1l4 4.500-4 4V7C6 7 4 7 3 9z" /></Glyph>
          共享
        </ShareButton>
      </TabRow>
      <Ribbon>
        <RibbonEdge />
        <Group title="活动字段">
          <Stack $width={110}>
            <FieldLabel htmlFor="active-field">活动字段:</FieldLabel>
            <FieldInput id="active-field" defaultValue="单位名称" />
            <SmallButton $height={20} disabled>{small.settings}字段设置</SmallButton>
          </Stack>
          <RibbonButton icon="down" lines={['向下钻取']} width={50} disabled />
          <RibbonButton icon="up" lines={['向上钻', '取']} width={46} menu disabled />
          <Stack $width={76} $top={4}>
            <SmallButton $height={32} disabled>{small.expand}展开字段</SmallButton>
            <SmallButton $height={32} disabled>{small.collapse}折叠字段</SmallButton>
          </Stack>
        </Group>
        <Group title="组合">
          <Stack $width={77}>
            <SmallButton $height={23} disabled>{small.arrow}分组选择</SmallButton>
            <SmallButton $height={23} disabled>{small.ungroup}取消组合</SmallButton>
            <SmallButton $height={23} disabled>{small.date}分组字段</SmallButton>
          </Stack>
        </Group>
        {GROUPS.map(g => (
          <Group key={g.title} title={g.title}>
            {g.items.map(item => <RibbonButton key={item.icon} {...item} />)}
          </Group>
        ))}
      </Ribbon>
    </>
  );
}

function Formula() {
  return (
    <FormulaBar>
      <NameBox aria-label="名称框"><Triangle color="#777" /></NameBox>
      <Grip $width={30}><Dots /></Grip>
      <FormulaTools>
        <button aria-label="取消"><Glyph w={12} h={12} color="#b0b0b0"><path d="M1 1l10 10M11 1L1 11" strokeWidth="1.600" /></Glyph></button>
        <button aria-label="输入"><Glyph w={14} h={12} color="#b0b0b0"><path d="M1 6l4 5 8-10" strokeWidth="1.800" /></Glyph></button>
        <button aria-label="插入函数">
          <Glyph w={14} h={16}>
            <text x="1" y="12" fontFamily="Liberation Serif" fontStyle="italic" fontWeight="bold" fontSize="15" fill="#555" stroke="none">f<tspan fontSize="11">x</tspan></text>
          </Glyph>
        </button>
      </FormulaTools>
      <FormulaInput defaultValue="行标签" aria-label="编辑栏" />
    </FormulaBar>
  );
}

function Sheet() {
  return (
    <Viewport>
      <Grid>
        <colgroup>
          <col width="355" />
          <col width="105" />
          {EMPTY.map(c => <col key={c} width="72" />)}
        </colgroup>
        <thead>
          <tr>{COLUMNS.map(c => <ColumnHeader key={c} $active={c === 'A'}>{c}</ColumnHeader>)}</tr>
        </thead>
        <tbody>
          <tr><Cell /><Cell /><Blank /></tr>
          <tr><Cell /><Cell /><Blank /></tr>
          <tr>
            <SelectedCell>
              <FilterButton aria-label="行标签"><Triangle color="#777" /></FilterButton>
              <Selection />
            </SelectedCell>
            <PivotHead>求和项:金额</PivotHead>
            <Blank />
          </tr>
          {ROWS.map(([name, amount], i) => (
            <tr key={i}>
              <NameCell>{name}</NameCell>
              <AmountCell>{amount}</AmountCell>
              <Blank />
            </tr>
          ))}
        </tbody>
      </Grid>
      <Pointer width="16" height="16" viewBox="0 0 16 16">
        <path d="M5 1h5v4h4v5h-4v4H5v-4H1V5h4z" fill="#fff" stroke="#000" strokeWidth="1.500" />
        <path d="M11 14.500V11h3.500" fill="none" stroke="#000" strokeWidth="1.500" />
      </Pointer>
    </Viewport>
  );
}

function SheetFooter() {
  return (
    <SheetBar>
      <SheetTabs>
        {SHEETS.map(s => (
          <SheetTab key={s.name} $width={s.width} $active={s.active} $divided={s.divided}>{s.name}</SheetTab>
        ))}
      </SheetTabs>
      <AddSheet aria-label="新工作表">
        <Glyph w={19} h={19} color="#777"><circle cx="9.500" cy="9.500" r="7.500" /><path d="M5 9.500h9M9.500 5v9" strokeWidth="2" /></Glyph>
      </AddSheet>
      <BarEnd>
        <Grip $width={32}><Dots /></Grip>
        <HScroll>
          <ScrollButton aria-label="向左"><Triangle dir="left" /></ScrollButton>
          <Thumb $size={525} />
          <ScrollButton aria-label="向右"><Triangle dir="right" /></ScrollButton>
        </HScroll>
      </BarEnd>
    </SheetBar>
  );
}

const FieldDrop = ({ name }) => (
  <FieldPill>
    <PillSelect aria-label={name}><option>{name}</option></PillSelect>
    <Triangle />
  </FieldPill>
);

function PivotPane() {
  return (
    <Pane>
      <PaneTitle>数据透视表字段</PaneTitle>
      <PaneText $top={11} $indent={1}>选择要添加到报表的字段:</PaneText>
      <PaneSearch placeholder="搜索" aria-label="搜索字段" />
      <FieldList>
        {FIELDS.map(([name, on]) => (
          <Check key={name} $bold={on}>
            <CheckBox type="checkbox" defaultChecked={on} />
            {name}
          </Check>
        ))}
        <MoreLink href="#more">更多表格...</MoreLink>
      </FieldList>
      <Divider />
      <PaneText $top={4} $indent={4}>在以下区域间拖动字段:</PaneText>
      <Areas>
        <Area>
          <AreaTitle><Glyph w={12} h={12}><path d="M0 0h11v2L7 6v5H4V6L0 2z" fill="#8a8a8a" stroke="none" /></Glyph>筛选</AreaTitle>
          <AreaBox />
        </Area>
        <Area $right>
          <AreaTitle><Glyph w={11} h={12} color="#8a8a8a"><path d="M1.500 1v10" strokeWidth="3" /><path d="M4.500 1v10M7.500 1v10M9.500 1v10" /></Glyph>列</AreaTitle>
          <AreaBox />
        </Area>
        <Area $bottom>
          <AreaTitle><Glyph w={12} h={12} color="#8a8a8a"><path d="M1 2h10" strokeWidth="3" /><path d="M1 5.500h10M1 8h10M1 10.500h10" /></Glyph>行</AreaTitle>
          <AreaBox><FieldDrop name="单位名称" /></AreaBox>
        </Area>
        <Area $right $bottom>
          <AreaTitle><Glyph w={11} h={12} color="#8a8a8a"><path d="M9.500 3V1.500h-8l4 4.500-4 4.500h8V9" strokeWidth="1.400" /></Glyph>值</AreaTitle>
          <AreaBox><FieldDrop name="求和项:金额" /></AreaBox>
        </Area>
      </Areas>
      <Defer>
        <Check>
          <CheckBox type="checkbox" />
          延迟布局更新
        </Check>
      </Defer>
    </Pane>
  );
}

function Desktop() {
  return (
    <Taskbar>
      <TaskSearch placeholder="在这里输入你要搜索的内容" aria-label="搜索" />
      <Apps>
        {APPS.map(name => (
          <AppButton key={name} aria-label={name} $active={name === 'excel'} $stacked={name === 'explorer'}>
            {appIcons[name]}
          </AppButton>
        ))}
      </Apps>
      <Tray>
        <Glyph w={14} h={8} color="#111"><path d="M1 7l6-6 6 6" strokeWidth="1.300" /></Glyph>
        <Glyph w={17} h={14} color="#111"><path d="M5.500 5.500h10v6h-10z" strokeWidth="1.200" /><path d="M6 6h8v5H6zM15 7h2v3h-2zM0 3h5v3a2 2 0 0 1-5 0zM1 1h1v2H1zM3 1h1v2H3zM2 7h1v4H2z" fill="#111" stroke="none" /></Glyph>
        <Glyph w={15} h={14} color="#111"><path d="M1 12C2 6 7 2 13 1M4 12c1-4 4-7 9-8M7 12c1-2 3-4 6-5M10 12c0-1 1-2 3-2.500" /><circle cx="12" cy="12" r="1.500" fill="#111" stroke="none" /></Glyph>
        <Glyph w={17} h={14} color="#111"><path d="M1 5h2l4-4v12L3 9H1zM9 5c1 1 1 3 0 4" /><path d="M11.500 3c2 2 2 6 0 8M14 1c3 3 3 9 0 12" stroke="#999" /></Glyph>
        <Ime>英</Ime>
        <Ime $boxed>拼</Ime>
        <Clock>{'13:20\n2021/4/26'}</Clock>
      </Tray>
    </Taskbar>
  );
}

export default function App() {
  return (
    <Window>
      <GlobalStyle />
      <Title />
      <RibbonPanel />
      <Formula />
      <Workspace>
        <SheetArea>
          <GridRow>
            <Sheet />
            <VScroll>
              <ScrollButton aria-label="向上"><Triangle dir="up" /></ScrollButton>
              <Thumb $vertical $size={330} />
              <ScrollButton aria-label="向下"><Triangle /></ScrollButton>
            </VScroll>
          </GridRow>
          <SheetFooter />
        </SheetArea>
        <PivotPane />
      </Workspace>
      <StatusBar>
        <ViewButton $active aria-label="普通"><Glyph w={14} h={14}><path d="M.5.5h13v13H.5zM.5 5h13M.5 9h13M5 .5v13M9 .5v13" /></Glyph></ViewButton>
        <ViewButton aria-label="页面布局"><Glyph w={14} h={14}><path d="M.5.5h13v13H.5zM3.500 2.500h7v9h-7zM5 5h4M5 7h4M5 9h4" /></Glyph></ViewButton>
        <ViewButton aria-label="分页预览"><Glyph w={14} h={14}><path d="M.5.5h13v13H.5zM5.500.5v8M.5 8.500h9v-8" /></Glyph></ViewButton>
        <Zoom>
          <button aria-label="缩小"><Glyph w={8} h={2}><path d="M0 1h8" strokeWidth="1.500" /></Glyph></button>
          <ZoomRange type="range" defaultValue={50} aria-label="缩放" />
        </Zoom>
      </StatusBar>
      <Desktop />
    </Window>
  );
}
